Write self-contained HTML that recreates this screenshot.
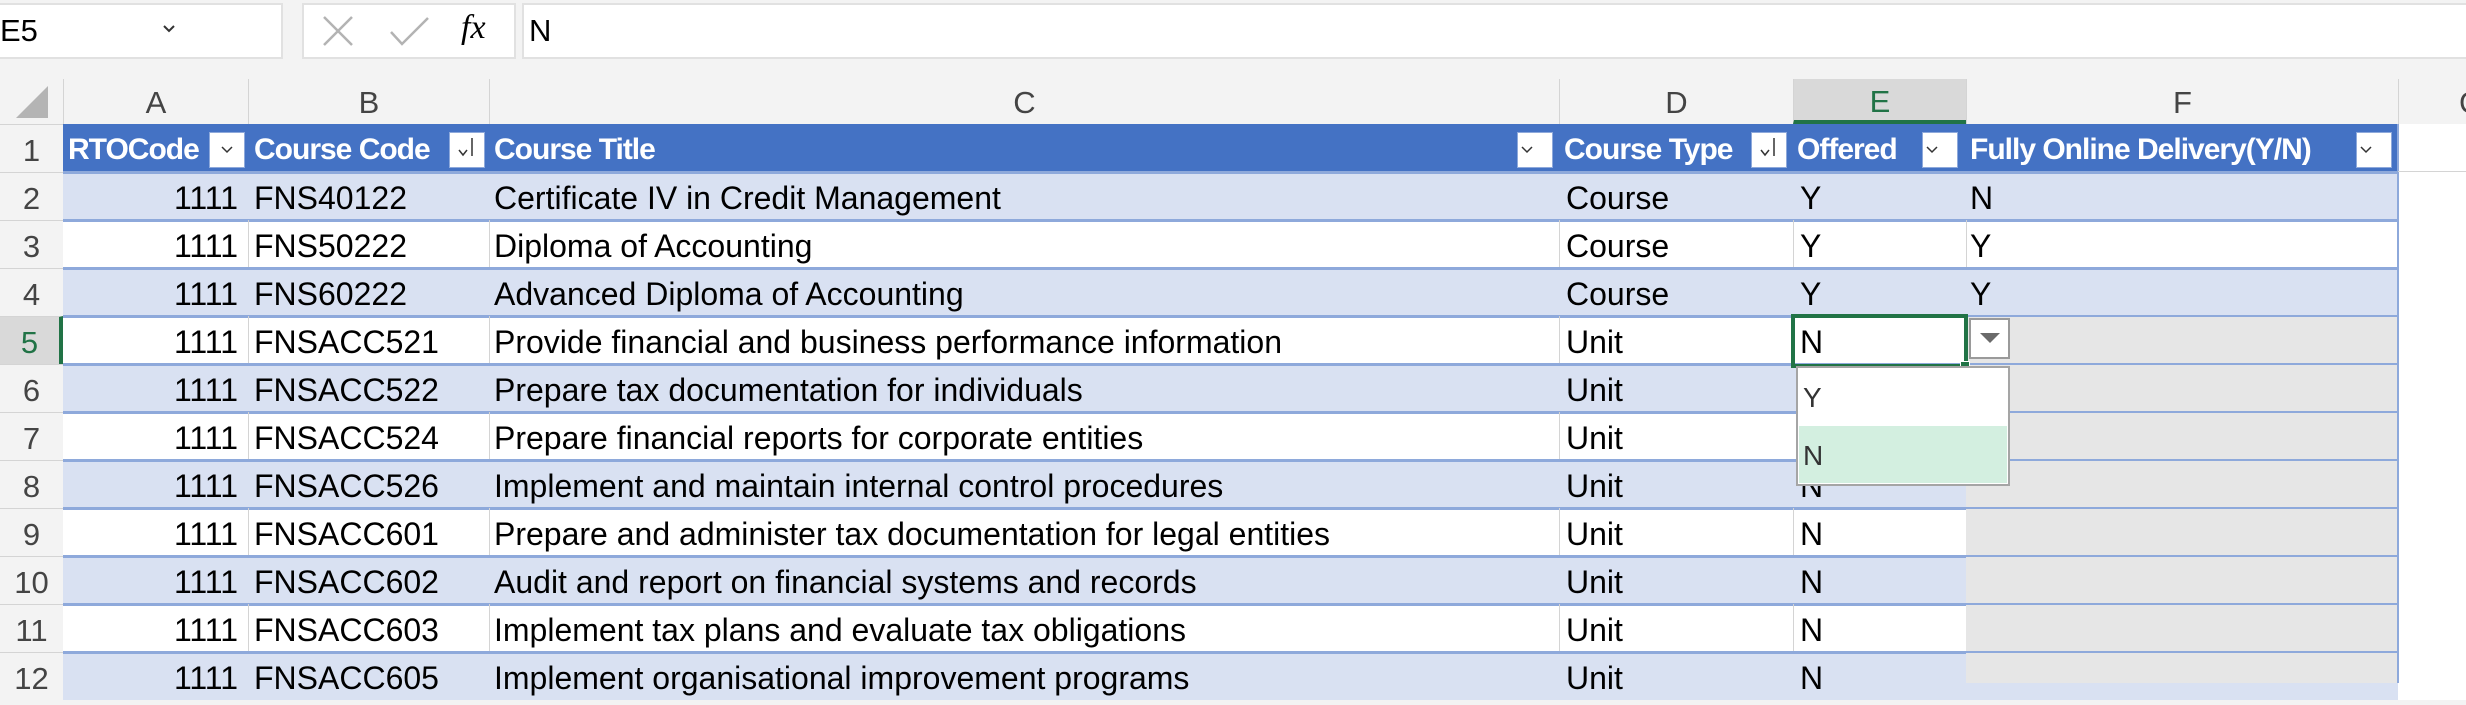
<!DOCTYPE html>
<html><head><meta charset="utf-8"><style>
*{margin:0;padding:0;box-sizing:border-box}
body{width:2466px;height:683px;overflow:hidden;background:#f3f3f3;font-family:"Liberation Sans",sans-serif;position:relative}
.a{position:absolute}
.box{position:absolute;background:#fff;border:2px solid #e1e1e1}
.ch{position:absolute;top:79px;height:45px;line-height:47px;text-align:center;color:#444;font-size:31px;border-left:1px solid #d4d4d4}
.rh{position:absolute;left:0;width:63px;height:48px;line-height:52px;text-align:center;color:#444;font-size:31px;border-top:1px solid #d4d4d4;background:#f3f3f3}
.row{position:absolute;left:63px;width:2403px;height:48px;font-size:32px;line-height:52px;color:#000}
.row span{position:absolute;top:0;white-space:nowrap}
.band{background:linear-gradient(to right,#d9e1f2 0,#d9e1f2 2335px,#fff 2335px)}
.wh{background:#fff}
.bl{position:absolute;left:0;width:2336px;height:3px;background:#8ea9db;top:-1px}
.vg{position:absolute;top:0;height:48px;width:1px;background:#d4d4d4}
.fb{position:absolute;top:8px;width:36px;height:36px;background:#fff;border:1px solid #8ea9db}
.gl{position:absolute;left:1966px;width:432px;height:2px;background:#8ea9db}
</style></head><body>
<div class="box" style="left:-2px;top:3px;width:285px;height:56px"></div>
<div class="a" style="left:0;top:11px;font-size:31px;line-height:40px">E5</div>
<svg class="a" style="left:162px;top:24px" width="14" height="10"><path d="M2 2 L7 7 L12 2" stroke="#333" stroke-width="2" fill="none"/></svg>
<div class="box" style="left:302px;top:3px;width:214px;height:56px"></div>
<svg class="a" style="left:320px;top:14px" width="40" height="34"><path d="M4 3 L32 31 M32 3 L4 31" stroke="#b3b3b3" stroke-width="2.5" fill="none"/></svg>
<svg class="a" style="left:388px;top:14px" width="44" height="34"><path d="M3 18 L14 30 L40 4" stroke="#b3b3b3" stroke-width="2.5" fill="none"/></svg>
<div class="a" style="left:461px;top:9px;font-family:'Liberation Serif',serif;font-style:italic;font-size:34px">fx</div>
<div class="box" style="left:522px;top:3px;width:1950px;height:56px"></div>
<div class="a" style="left:529px;top:11px;font-size:31px;line-height:40px">N</div>

<svg class="a" style="left:14px;top:84px" width="40" height="36"><path d="M34 2 L34 34 L2 34 Z" fill="#b4b4b4"/></svg>
<div class="ch" style="left:63px;width:185px">A</div>
<div class="ch" style="left:248px;width:241px">B</div>
<div class="ch" style="left:489px;width:1070px">C</div>
<div class="ch" style="left:1559px;width:234px">D</div>
<div class="ch" style="left:1793px;width:173px;background:#d9d9d9;color:#217346;border-bottom:4px solid #217346;line-height:45px">E</div>
<div class="ch" style="left:1966px;width:432px">F</div>
<div class="ch" style="left:2398px;width:100px;text-align:left;padding-left:60px">G</div>

<div class="rh" style="top:124px">1</div>
<div class="rh" style="top:172px">2</div>
<div class="rh" style="top:220px">3</div>
<div class="rh" style="top:268px">4</div>
<div class="rh" style="top:316px;background:#d9d9d9;color:#217346;border-right:4px solid #217346">5</div>
<div class="rh" style="top:364px">6</div>
<div class="rh" style="top:412px">7</div>
<div class="rh" style="top:460px">8</div>
<div class="rh" style="top:508px">9</div>
<div class="rh" style="top:556px">10</div>
<div class="rh" style="top:604px">11</div>
<div class="rh" style="top:652px">12</div>

<div class="row" style="top:124px;background:linear-gradient(to right,#4472c4 0,#4472c4 2335px,#fff 2335px);color:#fff;font-weight:bold;font-size:30px;letter-spacing:-1px;line-height:52px">
<span style="left:5px">RTOCode</span><div class="fb" style="left:146px"></div>
<span style="left:191px">Course Code</span><div class="fb" style="left:386px"></div>
<span style="left:431px">Course Title</span><div class="fb" style="left:1454px"></div>
<span style="left:1501px">Course Type</span><div class="fb" style="left:1688px"></div>
<span style="left:1734px">Offered</span><div class="fb" style="left:1859px"></div>
<span style="left:1907px">Fully Online Delivery(Y/N)</span><div class="fb" style="left:2293px"></div>
</div>
<svg class="a" style="left:0;top:124px" width="2466" height="48">
<g stroke="#333" stroke-width="1.5" fill="none">
<path d="M222 23 L227 28 L232 23"/><path d="M1522 23 L1527 28 L1532 23"/><path d="M1927 23 L1932 28 L1937 23"/><path d="M2361 23 L2366 28 L2371 23"/>
<path d="M459 26 L463 31 L467 26 M472 14 L472 32"/><path d="M1761 26 L1765 31 L1769 26 M1774 14 L1774 32"/>
</g></svg>

<div class="row band" style="top:172px"><div class="bl"></div><span style="right:2228px">1111</span><span style="left:191px">FNS40122</span><span style="left:431px">Certificate IV in Credit Management</span><span style="left:1503px">Course</span><span style="left:1737px">Y</span><span style="left:1907px">N</span></div>
<div class="row wh" style="top:220px"><div class="bl"></div><div class="vg" style="left:185px"></div><div class="vg" style="left:426px"></div><div class="vg" style="left:1496px"></div><div class="vg" style="left:1730px"></div><div class="vg" style="left:1903px"></div><span style="right:2228px">1111</span><span style="left:191px">FNS50222</span><span style="left:431px">Diploma of Accounting</span><span style="left:1503px">Course</span><span style="left:1737px">Y</span><span style="left:1907px">Y</span></div>
<div class="row band" style="top:268px"><div class="bl"></div><span style="right:2228px">1111</span><span style="left:191px">FNS60222</span><span style="left:431px">Advanced Diploma of Accounting</span><span style="left:1503px">Course</span><span style="left:1737px">Y</span><span style="left:1907px">Y</span></div>
<div class="row wh" style="top:316px"><div class="bl"></div><div class="vg" style="left:185px"></div><div class="vg" style="left:426px"></div><div class="vg" style="left:1496px"></div><span style="right:2228px">1111</span><span style="left:191px">FNSACC521</span><span style="left:431px">Provide financial and business performance information</span><span style="left:1503px">Unit</span><span style="left:1737px">N</span></div>
<div class="row band" style="top:364px"><div class="bl"></div><span style="right:2228px">1111</span><span style="left:191px">FNSACC522</span><span style="left:431px">Prepare tax documentation for individuals</span><span style="left:1503px">Unit</span></div>
<div class="row wh" style="top:412px"><div class="bl"></div><div class="vg" style="left:185px"></div><div class="vg" style="left:426px"></div><div class="vg" style="left:1496px"></div><span style="right:2228px">1111</span><span style="left:191px">FNSACC524</span><span style="left:431px">Prepare financial reports for corporate entities</span><span style="left:1503px">Unit</span></div>
<div class="row band" style="top:460px"><div class="bl"></div><span style="right:2228px">1111</span><span style="left:191px">FNSACC526</span><span style="left:431px">Implement and maintain internal control procedures</span><span style="left:1503px">Unit</span><span style="left:1737px">N</span></div>
<div class="row wh" style="top:508px"><div class="bl"></div><div class="vg" style="left:185px"></div><div class="vg" style="left:426px"></div><div class="vg" style="left:1496px"></div><div class="vg" style="left:1730px"></div><span style="right:2228px">1111</span><span style="left:191px">FNSACC601</span><span style="left:431px">Prepare and administer tax documentation for legal entities</span><span style="left:1503px">Unit</span><span style="left:1737px">N</span></div>
<div class="row band" style="top:556px"><div class="bl"></div><span style="right:2228px">1111</span><span style="left:191px">FNSACC602</span><span style="left:431px">Audit and report on financial systems and records</span><span style="left:1503px">Unit</span><span style="left:1737px">N</span></div>
<div class="row wh" style="top:604px"><div class="bl"></div><div class="vg" style="left:185px"></div><div class="vg" style="left:426px"></div><div class="vg" style="left:1496px"></div><div class="vg" style="left:1730px"></div><span style="right:2228px">1111</span><span style="left:191px">FNSACC603</span><span style="left:431px">Implement tax plans and evaluate tax obligations</span><span style="left:1503px">Unit</span><span style="left:1737px">N</span></div>
<div class="row band" style="top:652px"><div class="bl"></div><span style="right:2228px">1111</span><span style="left:191px">FNSACC605</span><span style="left:431px">Implement organisational improvement programs</span><span style="left:1503px">Unit</span><span style="left:1737px">N</span></div>

<div class="a" style="left:1966px;top:317px;width:432px;height:366px;background:#e6e6e6"></div>
<div class="gl" style="top:363px"></div>
<div class="gl" style="top:411px"></div>
<div class="gl" style="top:459px"></div>
<div class="gl" style="top:507px"></div>
<div class="gl" style="top:555px"></div>
<div class="gl" style="top:603px"></div>
<div class="gl" style="top:651px"></div>
<div class="a" style="left:2397px;top:124px;width:2px;height:559px;background:#8ea9db"></div>
<div class="a" style="left:2398px;top:171px;width:68px;height:1px;background:#d4d4d4"></div>

<div class="a" style="left:1791px;top:314px;width:177px;height:54px;border:4px solid #217346"></div>
<div class="a" style="left:1960px;top:361px;width:10px;height:10px;background:#217346;border:1px solid #fff"></div>
<div class="a" style="left:1969px;top:318px;width:41px;height:41px;background:#fff;border:2px solid #9a9a9a"></div>
<svg class="a" style="left:1979px;top:332px" width="22" height="12"><path d="M1 1 L21 1 L11 11 Z" fill="#6a6a6a"/></svg>
<div class="a" style="left:1796px;top:366px;width:214px;height:120px;background:#fff;border:2px solid #a5a5a5"></div>
<div class="a" style="left:1799px;top:426px;width:208px;height:57px;background:#d3efe0"></div>
<div class="a" style="left:1803px;top:376px;font-size:28px;line-height:44px;color:#333">Y</div>
<div class="a" style="left:1803px;top:434px;font-size:28px;line-height:44px;color:#333">N</div>
</body></html>
